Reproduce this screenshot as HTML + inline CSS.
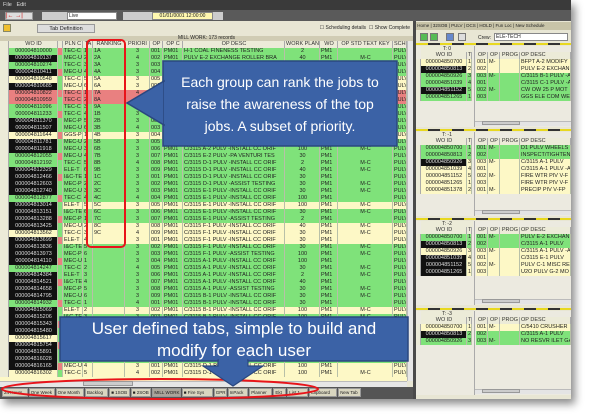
<!DOCTYPE html>
<html><head><meta charset="utf-8">
<style>
*{margin:0;padding:0;box-sizing:border-box}
body{width:610px;height:418px;background:#fff;position:relative;overflow:hidden;font-family:"Liberation Sans",sans-serif;font-size:5.5px;color:#222}
.win{position:absolute;left:0;top:0;width:571px;height:399px;background:#4a4a4a;box-shadow:4px 5px 8px rgba(0,0,0,.45)}
.abs{position:absolute}
.row{position:absolute;left:0;height:7px;white-space:nowrap;line-height:7px}
.c{position:absolute;top:0;height:7px;overflow:hidden;border-right:1px solid #b8c0a8;padding-left:1px}
.g{background:#7fe27a}.y{background:#fdf8c6}.r{background:#e98080}
.blk{background:#111;color:#ddd}
.hd{background:#ecebd8;border-right:1px solid #aaa;color:#333;text-align:center}
.tab{position:absolute;top:388px;height:9px;background:#d9d6c0;border:1px solid #999;font-size:4.5px;line-height:8px;padding:0 1px;color:#222;overflow:hidden;white-space:nowrap}
</style></head><body>
<div class="win">
 <div class="abs" style="left:0;top:0;width:571px;height:10px;background:#3a3a3a;color:#ddd;font-size:5.5px;line-height:10px;padding-left:3px">File &nbsp; Edit</div>
 <div class="abs" style="left:0;top:10px;width:571px;height:11px;background:#5a5a5a"></div>
 <div class="abs" style="left:5px;top:12px;width:28px;height:8px;background:#ddd;border:1px solid #999"><span style="color:#c00;font-size:6px">|← →|</span></div>
 <div class="abs" style="left:42px;top:12px;width:75px;height:8px;background:#ccc"></div>
 <div class="abs" style="left:67px;top:12px;width:50px;height:8px;background:#fff;border:1px solid #888;font-size:5px;line-height:6px;padding-left:1px">Live</div>
 <div class="abs" style="left:123px;top:12px;width:100px;height:8px;background:#ccc"></div>
 <div class="abs" style="left:152px;top:12px;width:61px;height:8px;background:#fff8b0;border:1px solid #888;font-size:5px;line-height:6px;text-align:center">01/01/0001 12:00:00</div>
 <div class="abs" style="left:0;top:21px;width:413px;height:378px;background:#e8e6d4"></div>
 <div class="abs" style="left:3px;top:24px;width:8px;height:8px;background:#f0c030;border:1px solid #886"></div>
 <div class="abs" style="left:37px;top:24px;width:58px;height:9px;background:#ddd;border:1px solid #999;text-align:center;line-height:8px">Tab Definition</div>
 <div class="abs" style="left:260px;top:25px;width:150px;height:8px;font-size:5px;text-align:right">☐ Scheduling details &nbsp;☐ Show Complete</div>
 <div class="abs" style="left:0;top:36px;width:413px;height:5px;background:#d0ccb4;text-align:center;font-size:5px;line-height:5px">MILL WORK: 173 records</div>
 <div id="grid" class="abs" style="left:0;top:41px;width:407px;height:340px;overflow:hidden;background:#fdf8c6"></div>
 <div class="abs" style="left:407px;top:41px;width:6px;height:340px;background:#e6e6e6;border-left:1px solid #bbb"></div>
 <div class="abs" style="left:0;top:381px;width:407px;height:6px;background:#e6e6e6;border-top:1px solid #bbb"></div>
 <div class="abs" style="left:83px;top:381px;width:50px;height:5px;background:#ccc;border:1px solid #999"></div>
 <div class="abs" style="left:0;top:387px;width:413px;height:12px;background:#555"></div>
 <div id="tabs"></div>
 <div class="abs" style="left:416px;top:21px;width:155px;height:378px;background:#e8e6d4"></div>
 <div class="abs" style="left:416px;top:22px;width:155px;height:8px;background:#c8c4a8;font-size:4.5px;line-height:8px;white-space:nowrap;overflow:hidden">&nbsp;Home | 32SOB | PULV | DCS | HOLD | Fun Loc | New Schedule</div>
 <div class="abs" style="left:420px;top:33px;width:8px;height:8px;background:#5b5;border:1px solid #777"></div>
 <div class="abs" style="left:430px;top:33px;width:8px;height:8px;background:#5b5;border:1px solid #777"></div>
 <div class="abs" style="left:446px;top:33px;width:8px;height:8px;background:#68c;border:1px solid #777"></div>
 <div class="abs" style="left:458px;top:33px;width:8px;height:8px;background:#ddd;border:1px solid #777"></div>
 <div class="abs" style="left:478px;top:35px;font-size:5px">Crew:</div>
 <div class="abs" style="left:494px;top:33px;width:74px;height:8px;background:#fff;border:1px solid #888;font-size:5px;line-height:6px;padding-left:1px">ELE-TECH</div>
 <div id="rp"></div>
</div>
<svg class="abs" style="left:0;top:0" width="610" height="418">
 <rect x="87" y="40" width="38" height="207" rx="4" fill="none" stroke="#e8141a" stroke-width="2"/>
 <ellipse cx="160" cy="389" rx="158" ry="10" fill="none" stroke="#e8141a" stroke-width="2"/>
 <rect x="163" y="61" width="234" height="85" fill="#3b62a6" stroke="#2a477f" stroke-width="1.5"/>
 <polygon points="164,81 127,103 164,125" fill="#3b62a6" stroke="#2a477f" stroke-width="1.5"/>
 <rect x="164" y="82" width="3" height="42" fill="#3b62a6"/>
 <g fill="#fff" font-family="Liberation Sans, sans-serif" font-size="14" text-anchor="middle">
  <text x="280" y="87">Each group can rank the jobs to</text>
  <text x="280" y="109">raise the awareness of the top</text>
  <text x="280" y="131">jobs.  A subset of priority.</text>
 </g>
 <rect x="60" y="317" width="348" height="44" fill="#3b62a6" stroke="#2a477f" stroke-width="1.5"/>
 <polygon points="218,360 248,360 248,366 263,366 233,386 203,366 218,366" fill="#3b62a6" stroke="#2a477f" stroke-width="1.2"/>
 <rect x="219" y="358" width="28" height="4" fill="#3b62a6"/>
 <g fill="#fff" font-family="Liberation Sans, sans-serif" font-size="17" text-anchor="middle">
  <text x="234" y="334">User defined tabs, simple to build and</text>
  <text x="234" y="356">modify for each user</text>
 </g>
</svg>
<script>
(function(){
var cols=[[0,9,'hd',''],[9,49,'','WO ID'],[58,5,'',''],[63,20,'','PLN C'],[83,10,'','TA'],[93,32,'','RANKING'],[125,25,'','PRIORI'],[150,13,'','OP'],[163,20,'','OP C'],[183,102,'','OP DESC'],[285,35,'','WORK PLAN'],[320,18,'','WO'],[338,55,'','OP STD TEXT KEY'],[393,14,'','SCHE']];
var rank=['1A','2A','3A','4A','5A','6A','7A','8A','9A','1B','2B','3B','4B','5B','6B','7B','8B','9B','1C','2C','3C','4C','5C','6C','7C','8C','9C'];
var pln=['TEC-C','MEC-U','TEC-C','MEC-U','TEC-C','MEC-U','TEC-C','TEC-C','TEC-C','TEC-C','MEC-P','MEC-U','GGS-P','MEC-U','MEC-U','MEC-U','TEC-C','ELE-T','I&C-TE','MEC-P','MEC-U','TEC-C','ELE-T','I&C-TE','MEC-P','MEC-U','TEC-C','ELE-T','I&C-TE','MEC-P','MEC-U','TEC-C','ELE-T','I&C-TE','MEC-P','MEC-U','TEC-C','ELE-T','I&C-TE','MEC-P','MEC-U','TEC-C','ELE-T','I&C-TE','MEC-P','MEC-U','TEC-C'];
var desc=['H-1 COAL FINENESS TESTING','PULV E-2 EXCHANGE ROLLER BRA','','','','','','','','','','','','PULV D-2 -NEW THROAT INSERTS','C/3115 A-2 PULV -INSTALL CC ORIF','C/3115 E-2 PULV -PA VENTURI TES'];
var colors='ggggyyrrggggygggggggggyggyyygggggggggyggyygygyyyg';
var blk=[0,1,0,1,0,1,0,0,0,0,1,1,0,1,1,0,0,1,1,1,1,0,1,1,1,1,0,1,1,1,1,0,1,1,1,1,0,1,1,1,1,0,1,1,1,1,0];
var h='<div class="row" style="top:0;width:407px">';
cols.forEach(function(c){h+='<div class="c hd" style="left:'+c[0]+'px;width:'+c[1]+'px">'+c[3]+'</div>'});
h+='</div>';
var letters=['A','B','C','D','E','F'];
for(var i=0;i<47;i++){
 var cl=colors[i]=='y'?'y':colors[i]=='r'?'r':'g';
 var ty=7+i*7;
 var wo='0000048'+((10000+i*137)%99999);
 var d=desc[i]||('C/3115 '+letters[Math.floor(i/5)%6]+'-1 PULV -'+(i%5==4?'ASSIST TESTING':'INSTALL CC ORIF'));
 var v=['',wo,'',pln[i],''+(i%6+1),rank[i]||'',''+(i%5==1?4:3),'00'+(i%9+1),'PM01',d,''+[2,40,30,30,30,100,100,30][i%8],'PM1',(i%3?'M-C':''),'PULV'];
 h+='<div class="row" style="top:'+ty+'px;width:407px">';
 cols.forEach(function(c,k){
  var cc=k==0?'hd':cl;
  if(k==1&&blk[i])cc='blk';
  if(k==2)cc=(i%3==0?'r':'g');
  var al=(k==1||k==6||k==10||k==12)?'text-align:center;':'';
  h+='<div class="c '+cc+'" style="'+al+'left:'+c[0]+'px;width:'+c[1]+'px">'+v[k]+'</div>';
 });
 h+='</div>';
}
document.getElementById('grid').innerHTML=h;
var tabs=['24 Hours','One Week','One Month','Backlog','■ 1SOB','■ 2SOB','MILL WORK','■ Fire Sys','GPR','InPack','Planner','Ekt','List 1','Clipboard','New Tab'];
var x=2,t='';
tabs.forEach(function(n){var w=n.length*2.6+5;t+='<div class="tab" style="left:'+x+'px;width:'+w+'px;'+(n=='MILL WORK'?'background:#aaa59a;':'')+'">'+n+'</div>';x+=w+1;});
document.getElementById('tabs').innerHTML=t;
var secs=[[46,'T: 0',['y','y','g','g','g','g'],[0,1,0,0,1,0],['BFPT A-2 MODIFY','PULV E-2 EXCHAN','C/3115 B-1 PULV -A','C/3115 C-1 PULV -A','CW OW 25 P MOT','GGS ELE COM WE']],
 [132,'T: -1',['g','g','y','y','y','y','y'],[0,0,1,0,0,0,0],['D1 PULV WHEELS','INSPECT/TIGHTEN','C/3115 A-1 PULV','C/3115 A-1 PULV -A','FIRE WTR PIV V-F','FIRE WTR PIV V-F','PRECIP PIV V-FP']],
 [221,'T: -2',['g','g','y','y','y','y'],[0,1,0,1,1,1],['PULV E-2 EXCHAN','C/3115 A-1 PULV','C/3115 A-1 PULV -A','C/3115 E-1 PULV','PULV C-1 MISC RE','U2O PULV G-2 MO']],
 [311,'T: -3',['y','g','g'],[0,1,0],['C/5410 CRUSHER','C/3115 A-1 PULV','NO RESVR ILET GA']]];
var r='';
var ends=[131,220,309,399];
secs.forEach(function(s,si){
 var y=s[0],L=416;
 r+='<div class="abs" style="left:'+L+'px;top:'+(y-3)+'px;width:155px;height:2px;background:repeating-linear-gradient(90deg,#e8d820 0 12px,#333 12px 24px)"></div>';
 r+='<div class="abs" style="left:'+L+'px;top:'+y+'px;width:155px;height:'+(ends[si]-y-4)+'px;background:#eceae0"></div>';
 r+='<div class="abs" style="left:'+(L+5)+'px;top:'+y+'px;width:52px;height:6px;background:#ecebd8;text-align:center;font-size:5px;line-height:6px">'+s[1]+'</div>';
 r+='<div class="abs" style="left:474px;top:'+y+'px;width:1px;height:'+(ends[si]-y-4)+'px;background:#aaa"></div>';
 var hy=y+6;
 r+='<div class="row" style="left:'+L+'px;top:'+hy+'px;width:155px"><div class="c hd" style="left:5px;width:46px">WO ID</div><div class="c hd" style="left:51px;width:5px">T</div><div class="c hd" style="left:60px;width:12px">OP</div><div class="c hd" style="left:72px;width:12px">OP</div><div class="c hd" style="left:84px;width:20px">PROG</div><div class="c hd" style="left:104px;width:51px;text-align:left">OP DESC</div></div>';
 s[2].forEach(function(c,i){
  var cl=c[0]=='g'?'g':'y';var ry=hy+7+i*7;
  r+='<div class="row" style="left:'+L+'px;top:'+ry+'px;width:155px"><div class="c hd" style="left:0;width:5px"></div><div class="c '+(s[3][i]?'blk':cl)+'" style="left:5px;width:46px;text-align:center">0000048'+(50700+i*113)+'</div><div class="c '+cl+'" style="left:51px;width:5px">'+(i%5+1)+'</div><div class="c '+cl+'" style="left:60px;width:12px">00'+(i%3+1)+'</div><div class="c '+cl+'" style="left:72px;width:12px">'+(i%2?'':'M-')+'</div><div class="c '+cl+'" style="left:84px;width:20px"></div><div class="c '+cl+'" style="left:104px;width:51px">'+s[4][i]+'</div></div>';
 });
 r+='<div class="abs" style="left:475px;top:'+(ends[si]-10)+'px;width:96px;height:5px;background:#e4e4e4;border-top:1px solid #bbb"></div><div class="abs" style="left:482px;top:'+(ends[si]-10)+'px;width:38px;height:4px;background:#ccc;border:1px solid #999"></div>';
});
document.getElementById('rp').innerHTML=r;
})();
</script>
</body></html>
